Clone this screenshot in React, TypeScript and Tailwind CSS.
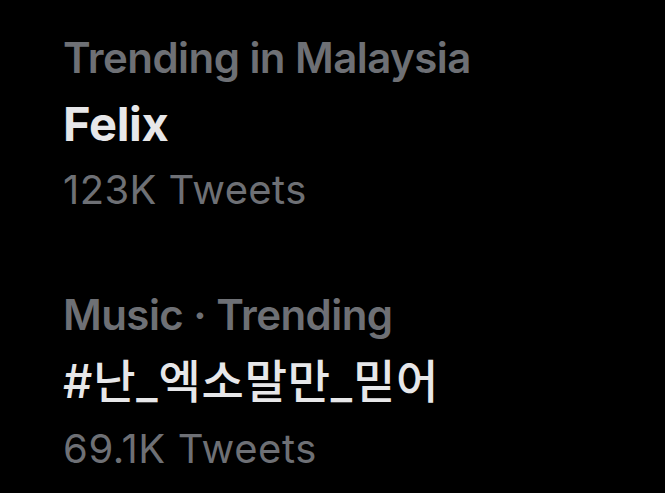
export default function App() {
  return (
    <div className="w-[665px] h-[493px] bg-black overflow-hidden pl-[63px] pt-[33px]" style={{ fontFamily: "Inter, 'Noto Sans CJK KR', sans-serif" }}>
      <div className="text-[42px] leading-[50px] font-semibold text-[#6e7075] tracking-[-0.55px]">Trending in Malaysia</div>
      <div className="mt-[13px] text-[47px] leading-[56px] font-bold text-[#e7e7e9] tracking-[-0.3px]">Felix</div>
      <div className="mt-[14px] text-[40px] leading-[48px] font-normal text-[#6e7075] tracking-[0.4px]">123K Tweets</div>
      <div className="mt-[76px] text-[42px] leading-[50px] font-semibold text-[#6e7075] tracking-[-0.55px]">Music · Trending</div>
      <div className="mt-[13px] text-[46px] leading-[56px] font-medium text-[#e7e7e9] tracking-[0.8px]">#난_엑소말만_믿어</div>
      <div className="mt-[16px] text-[40px] leading-[48px] font-normal text-[#6e7075] tracking-[0.6px]">69.1K Tweets</div>
    </div>
  );
}
